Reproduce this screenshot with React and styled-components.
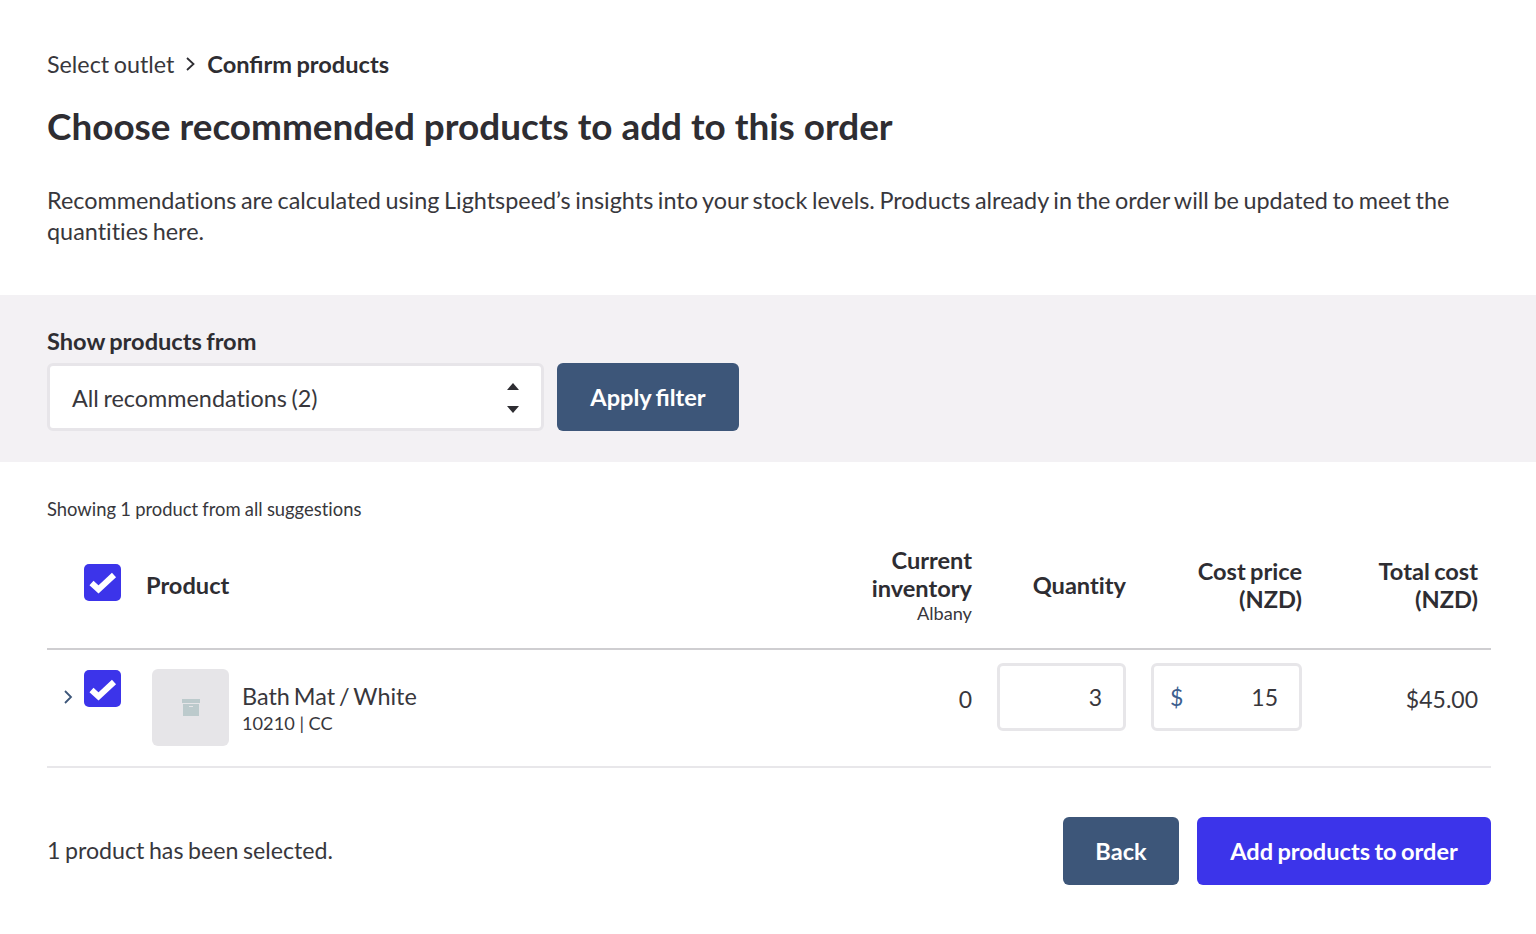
import React from "react";
import styled, { createGlobalStyle } from "styled-components";

const GlobalStyle = createGlobalStyle`
  html, body {
    margin: 0;
    padding: 0;
    background: #fff;
  }
  body {
    font-family: Lato, "Open Sans", sans-serif;
    font-variant-ligatures: none;
    word-spacing: -1.4px;
    color: #2e2d32;
  }
`;

const Page = styled.div`
  width: 1536px;
  height: 934px;
  overflow: hidden;
`;

const Intro = styled.header`
  height: 295px;
  box-sizing: border-box;
  padding: 48px 47px 0;
`;

const Breadcrumb = styled.nav`
  display: flex;
  align-items: center;
  height: 32px;
  font-size: 23.3px;
  color: #38373c;
  svg {
    margin: 0 10px 0 9px;
  }
  strong {
    font-size: 23.6px;
    font-weight: 700;
    font-variant-ligatures: normal;
    color: #2e2d32;
  }
`;

const Title = styled.h1`
  margin: 22px 0 0;
  font-size: 36.9px;
  line-height: 48px;
  font-weight: 700;
  word-spacing: 0;
`;

const Description = styled.p`
  margin: 35px 0 0;
  font-size: 23.4px;
  line-height: 31px;
  color: #38373c;
`;

const FilterBand = styled.section`
  height: 167px;
  box-sizing: border-box;
  padding: 30px 47px 0;
  background: #f3f1f4;
`;

const FilterLabel = styled.div`
  font-size: 23.6px;
  line-height: 32px;
  font-weight: 700;
  margin-bottom: 6px;
`;

const FilterRow = styled.div`
  display: flex;
  gap: 13px;
`;

const Select = styled.div`
  width: 497px;
  height: 68px;
  box-sizing: border-box;
  border: 3px solid #e7e5e9;
  border-radius: 6px;
  background: #fff;
  display: flex;
  align-items: center;
  justify-content: space-between;
  padding: 1px 21px 0 22px;
  font-size: 23.4px;
  color: #38373c;
`;

const Button = styled.button`
  height: 68px;
  width: ${(p) => p.$width}px;
  border: 0;
  border-radius: 6px;
  padding: 0;
  background: ${(p) => (p.$primary ? "#3c34ea" : "#3d5679")};
  color: #fff;
  font-family: inherit;
  font-size: 23.6px;
  font-weight: 700;
  font-variant-ligatures: normal;
  word-spacing: -1.4px;
`;

const Results = styled.section`
  padding: 0 45px 0 47px;
`;

const Count = styled.div`
  padding-top: 35px;
  height: 25px;
  font-size: 18.4px;
  line-height: 24px;
  word-spacing: -0.5px;
  color: #38373c;
`;

const TableRow = styled.div`
  display: grid;
  grid-template-columns: 780px 120px 129px 151px 151px;
  column-gap: 25px;
  padding-right: 13px;
  border-bottom: ${(p) => (p.$head ? "2px solid #cfced1" : "2px solid #e8e7ea")};
  height: ${(p) => (p.$head ? 126 : 116)}px;
`;

const HeadCell = styled.div`
  display: flex;
  flex-direction: column;
  align-items: flex-end;
  justify-content: center;
  padding-bottom: 1px;
  text-align: right;
  white-space: nowrap;
  font-size: 23.6px;
  line-height: 28px;
  font-weight: 700;
  small {
    font-size: 18.2px;
    line-height: 22px;
    font-weight: 400;
    color: #38373c;
  }
`;

const ProductHead = styled.div`
  display: flex;
  align-items: center;
  padding-left: 37px;
  gap: 25px;
  font-size: 23.6px;
  font-weight: 700;
`;

const CheckBox = styled.div`
  width: 37px;
  height: 37px;
  flex: none;
  border-radius: 5px;
  background: #3c34ea;
  display: flex;
  align-items: center;
  justify-content: center;
  ${ProductHead} > & {
    margin-bottom: 6px;
  }
`;

const ProductCell = styled.div`
  display: flex;
  align-items: flex-start;
  padding-top: 20px;
`;

const Caret = styled.div`
  width: 37px;
  height: 37px;
  flex: none;
  margin-top: 8px;
  display: flex;
  align-items: center;
  justify-content: center;
  padding-left: 5px;
  box-sizing: border-box;
`;

const Thumb = styled.div`
  width: 77px;
  height: 77px;
  flex: none;
  margin: -1px 13px 0 31px;
  border-radius: 6px;
  background: #e6e5e8;
  display: flex;
  align-items: center;
  justify-content: center;
`;

const ProductText = styled.div`
  padding-top: 11px;
`;

const ProductName = styled.div`
  font-size: 23.4px;
  line-height: 30px;
  word-spacing: -2px;
  color: #38373c;
`;

const ProductSku = styled.div`
  font-size: 18.2px;
  line-height: 24px;
  word-spacing: 0;
  color: #38373c;
`;

const ValueCell = styled.div`
  display: flex;
  align-items: center;
  justify-content: flex-end;
  padding-top: 13px;
  height: 84px;
  box-sizing: border-box;
  font-size: 23px;
  color: #38373c;
`;

const InputCell = styled.div`
  padding-top: 13px;
`;

const Input = styled.div`
  height: 68px;
  box-sizing: border-box;
  border: 3px solid #e7e6e9;
  border-radius: 6px;
  display: flex;
  align-items: center;
  justify-content: space-between;
  padding: 0 21px 0 16px;
  font-size: 23px;
  color: #38373c;
`;

const Currency = styled.span`
  color: #3d5f8f;
`;

const Footer = styled.footer`
  display: flex;
  align-items: center;
  justify-content: space-between;
  margin-top: 49px;
  font-size: 23.2px;
  color: #38373c;
`;

const FooterNote = styled.span`
  margin-bottom: 2px;
`;

const FooterActions = styled.div`
  display: flex;
  gap: 18px;
`;

const Check = () => (
  <svg width="29" height="24" viewBox="0 0 29 24" fill="none">
    <path d="M3.5 13 10.5 19.5 26 5" stroke="#fff" strokeWidth="6" />
  </svg>
);

const Updown = () => (
  <svg width="14" height="32" viewBox="0 0 14 32" fill="#2e2d32">
    <path d="M7 1 13 8H1Z" />
    <path d="M1 24H13L7 31Z" />
  </svg>
);

const BoxIcon = () => (
  <svg width="18" height="17" viewBox="0 0 18 17" fill="#bccacc">
    <path d="M0 0H18V4H0Z" />
    <path d="M1 5H17V17H1ZM7 7V8H11V7Z" fillRule="evenodd" />
  </svg>
);

export default function App() {
  return (
    <Page>
      <GlobalStyle />
      <Intro>
        <Breadcrumb>
          Select outlet
          <svg width="14" height="16" viewBox="0 0 14 16" fill="none">
            <path d="M4 2 10.5 8 4 14" stroke="#2e2d32" strokeWidth="1.8" />
          </svg>
          <strong>Confirm products</strong>
        </Breadcrumb>
        <Title>Choose recommended products to add to this order</Title>
        <Description>
          Recommendations are calculated using Lightspeed’s insights into your stock levels. Products already in the order will be updated to meet the quantities here.
        </Description>
      </Intro>
      <FilterBand>
        <FilterLabel>Show products from</FilterLabel>
        <FilterRow>
          <Select>
            All recommendations (2)
            <Updown />
          </Select>
          <Button $width={182}>Apply filter</Button>
        </FilterRow>
      </FilterBand>
      <Results>
        <Count>Showing 1 product from all suggestions</Count>
        <TableRow $head>
          <ProductHead>
            <CheckBox><Check /></CheckBox>
            Product
          </ProductHead>
          <HeadCell>
            <span>Current</span>
            <span>inventory</span>
            <small>Albany</small>
          </HeadCell>
          <HeadCell>Quantity</HeadCell>
          <HeadCell>
            <span>Cost price</span>
            <span>(NZD)</span>
          </HeadCell>
          <HeadCell>
            <span>Total cost</span>
            <span>(NZD)</span>
          </HeadCell>
        </TableRow>
        <TableRow>
          <ProductCell>
            <Caret>
              <svg width="12" height="16" viewBox="0 0 12 16" fill="none">
                <path d="M3 2 9 8 3 14" stroke="#3d5679" strokeWidth="1.8" />
              </svg>
            </Caret>
            <CheckBox><Check /></CheckBox>
            <Thumb><BoxIcon /></Thumb>
            <ProductText>
              <ProductName>Bath Mat / White</ProductName>
              <ProductSku>10210 | CC</ProductSku>
            </ProductText>
          </ProductCell>
          <ValueCell>0</ValueCell>
          <InputCell>
            <Input>
              <span />
              3
            </Input>
          </InputCell>
          <InputCell>
            <Input>
              <Currency>$</Currency>
              15
            </Input>
          </InputCell>
          <ValueCell>$45.00</ValueCell>
        </TableRow>
        <Footer>
          <FooterNote>1 product has been selected.</FooterNote>
          <FooterActions>
            <Button $width={116}>Back</Button>
            <Button $width={294} $primary>Add products to order</Button>
          </FooterActions>
        </Footer>
      </Results>
    </Page>
  );
}
